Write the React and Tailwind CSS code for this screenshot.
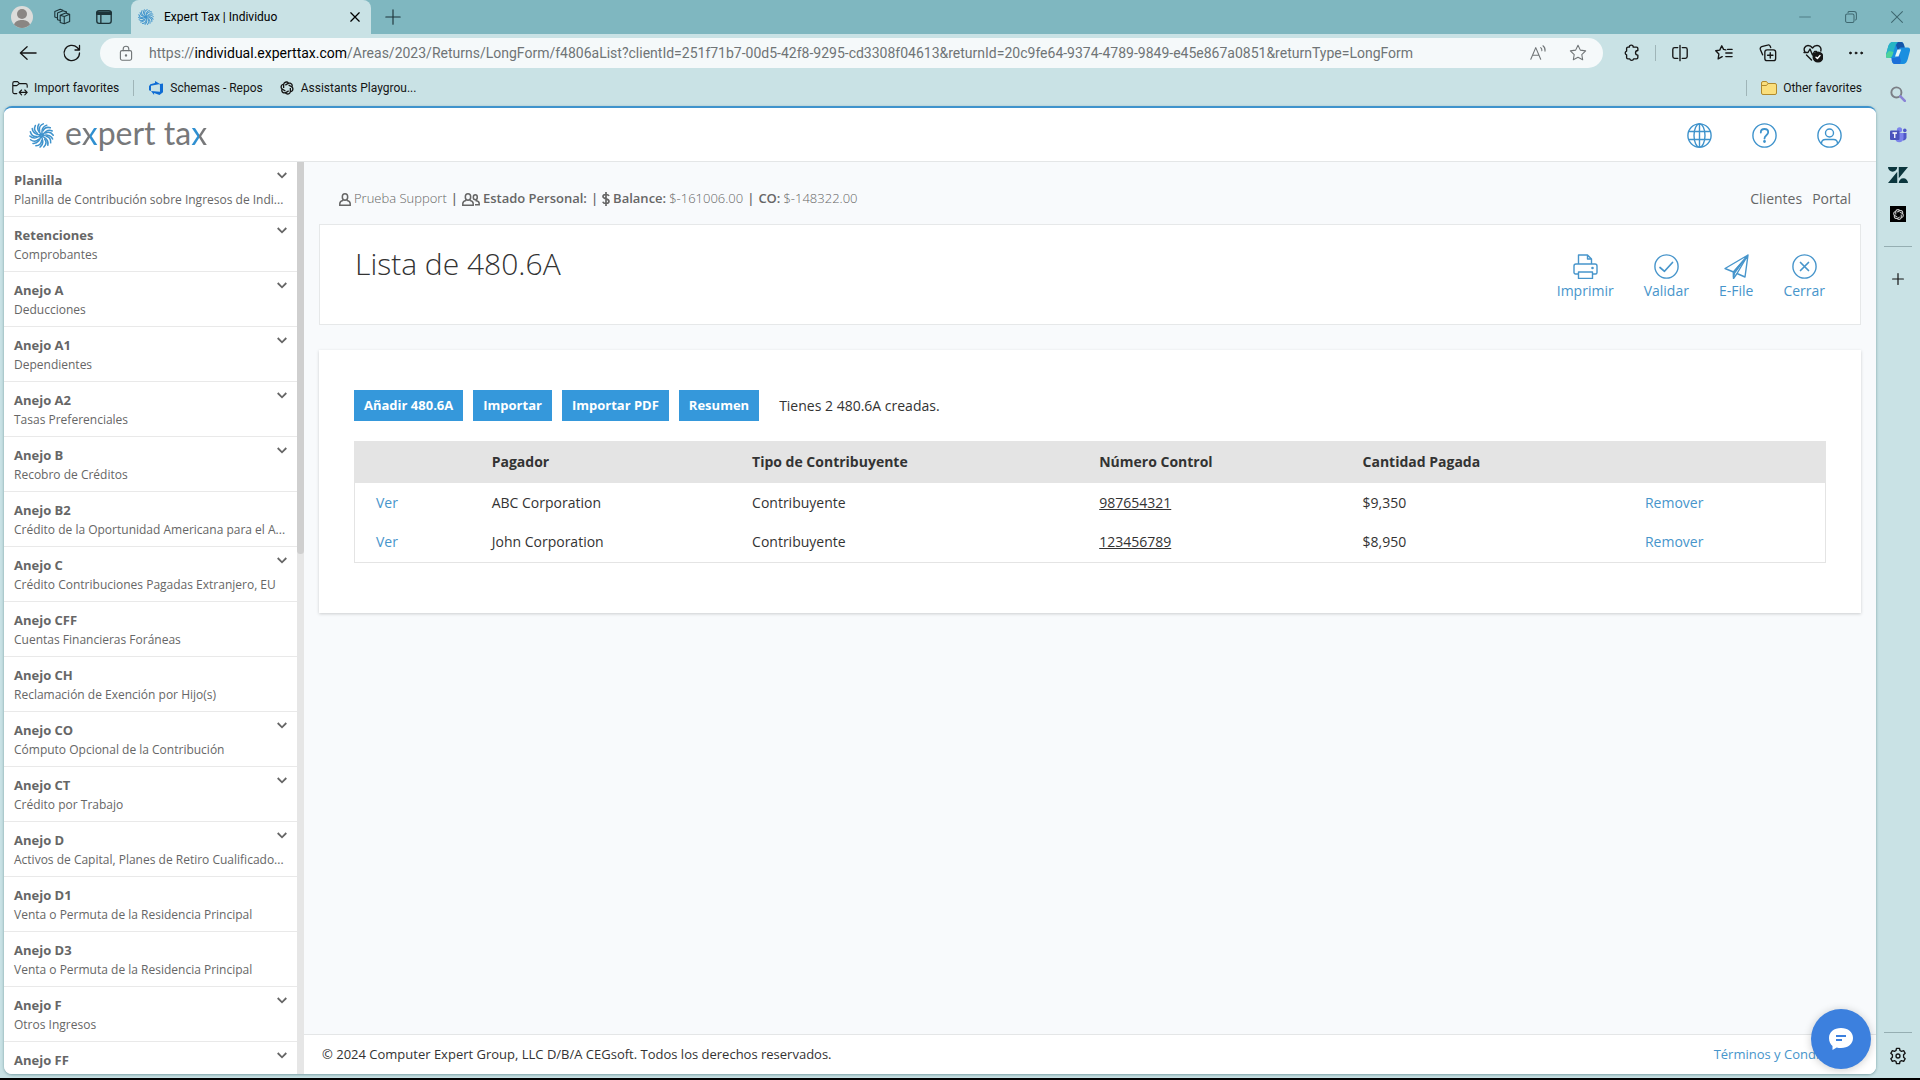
import { RiOpenaiLine } from "react-icons/ri";
import { VscAzureDevops } from "react-icons/vsc";

const BLUE = "#3f93cc";

const sections = [
  ["Planilla", "Planilla de Contribución sobre Ingresos de Indi...", true],
  ["Retenciones", "Comprobantes", true],
  ["Anejo A", "Deducciones", true],
  ["Anejo A1", "Dependientes", true],
  ["Anejo A2", "Tasas Preferenciales", true],
  ["Anejo B", "Recobro de Créditos", true],
  ["Anejo B2", "Crédito de la Oportunidad Americana para el A...", false],
  ["Anejo C", "Crédito Contribuciones Pagadas Extranjero, EU", true],
  ["Anejo CFF", "Cuentas Financieras Foráneas", false],
  ["Anejo CH", "Reclamación de Exención por Hijo(s)", false],
  ["Anejo CO", "Cómputo Opcional de la Contribución", true],
  ["Anejo CT", "Crédito por Trabajo", true],
  ["Anejo D", "Activos de Capital, Planes de Retiro Cualificado...", true],
  ["Anejo D1", "Venta o Permuta de la Residencia Principal", false],
  ["Anejo D3", "Venta o Permuta de la Residencia Principal", false],
  ["Anejo F", "Otros Ingresos", true],
  ["Anejo FF", "", true],
];

const rows = [
  { pagador: "ABC Corporation", tipo: "Contribuyente", control: "987654321", cantidad: "$9,350" },
  { pagador: "John Corporation", tipo: "Contribuyente", control: "123456789", cantidad: "$8,950" },
];

function Icon({ size = 18, box = 20, sw = 1.2, color = "currentColor", children }) {
  return (
    <svg
      width={size}
      height={size}
      viewBox={`0 0 ${box} ${box}`}
      fill="none"
      stroke={color}
      strokeWidth={sw}
      strokeLinecap="round"
      strokeLinejoin="round"
      className="shrink-0"
      aria-hidden="true"
    >
      {children}
    </svg>
  );
}

function Swirl({ size }) {
  return (
    <svg width={size} height={size} viewBox="-50 -50 100 100" fill="none" stroke={BLUE} strokeLinecap="round" className="shrink-0" aria-hidden="true">
      {Array.from({ length: 9 }, (_, i) => (
        <g key={i} transform={`rotate(${i * 40})`}>
          <path d="M3 3C8 -14 26 -26 43 -18" strokeWidth="6" />
          <path d="M16 -10C26 -15 39 -13 47 -1" strokeWidth="6" />
        </g>
      ))}
    </svg>
  );
}

function TabStrip() {
  return (
    <div className="flex h-[34px] shrink-0 items-center bg-[#7fb7c0] text-[#1d3338]">
      <button aria-label="Perfil" className="ml-[11px]">
        <svg width="22" height="22" viewBox="0 0 22 22" aria-hidden="true">
          <circle cx="11" cy="11" r="11" fill="#dcdcda" />
          <circle cx="11" cy="8" r="5" fill="#8a8683" />
          <path d="M3 18.500C4.500 15 7.500 14 11 14s6.500 1 8 4.500A11 11 0 0 1 3 18.500z" fill="#8a8683" />
        </svg>
      </button>
      <button aria-label="Espacios de trabajo" className="ml-5">
        <Icon size={18}>
          <path d="M8 8l6-2.500 4.500 1.500v8l-6 2.500L8 16zM8 8l4.500 1.500v8M12.500 9.500l6-2.500" />
          <path d="M8 14l-3-1V5.500L11 3l4 1.300v1M5 11l-3-1V4l6-2.500 3 1" />
        </Icon>
      </button>
      <button aria-label="Pestañas verticales" className="ml-6">
        <Icon size={18} sw={1.5}>
          <rect x="2" y="3" width="16" height="14" rx="2.500" />
          <path d="M2 4.500h16v2.500H2z" fill="currentColor" />
          <path d="M6.500 7v10" />
        </Icon>
      </button>
      <div className="ml-[18px] flex h-full w-[240px] items-center rounded-t-lg bg-[#c9e2e5] pr-[9px] pl-[7px] text-black">
        <Swirl size={16} />
        <span className="ml-[10px] flex-1 text-xs">Expert Tax | Individuo</span>
        <button aria-label="Cerrar pestaña">
          <Icon size={14} sw={1.8}><path d="M4 4l12 12M16 4L4 16" /></Icon>
        </button>
      </div>
      <button aria-label="Nueva pestaña" className="ml-[14px]">
        <Icon size={16} sw={1.4}><path d="M10 1v18M1 10h18" /></Icon>
      </button>
      <div className="ml-auto flex items-center gap-[34px] pr-[17px] text-[#3f6870]">
        <button aria-label="Minimizar"><Icon size={12}><path d="M1 10h18" /></Icon></button>
        <button aria-label="Restaurar">
          <Icon size={12} sw={1.7}>
            <rect x="1" y="5" width="14" height="14" rx="2.500" />
            <path d="M5 2.500A2 2 0 0 1 7 1h8a4 4 0 0 1 4 4v8a2 2 0 0 1-1.500 2" />
          </Icon>
        </button>
        <button aria-label="Cerrar ventana"><Icon size={12} sw={1.7}><path d="M1 1l18 18M19 1L1 19" /></Icon></button>
      </div>
    </div>
  );
}

function Copilot() {
  return (
    <svg width="24" height="22" viewBox="0 0 24 22" aria-hidden="true">
      <path d="M7 0h8c2 0 2.500 1.500 3 3l.7 2.500H22c2 0 2.400 2 1.800 4l-2 7.500c-.8 3-2.300 5-4.800 5H9c-2 0-2.700-1.500-3.200-3.500L5.300 16H2c-2 0-2.300-2-1.800-4l2-7.500C3 2 4.500 0 7 0z" fill="#1a8fe0" />
      <path d="M7 0h5.500c-2 .5-2.700 2-3.300 4L6.500 13c-.6 2-1.500 3-3.500 3H2c-2 0-2.300-2-1.800-4l2-7.500C3 2 4.500 0 7 0z" fill="#27b5c4" />
      <path d="M.2 12 3 9l4.500 1-1 3c-.6 2-1.500 3-3.500 3H2c-2 0-2.300-2-1.800-4z" fill="#4fd39a" />
      <path d="M12 0h3c2 0 2.500 1.500 3 3l.7 2.500h-3c-1.500 0-2.500.5-3 2L12 9 10 3z" fill="#1555a8" />
      <path d="M6 16h3c1.500 0 2-1 2.500-2.500l1-3L15 19l-1 3H9c-2 0-2.700-1.500-3.200-3.500z" fill="#1d6fd8" />
      <path d="M11.500 7.500h3.700l-2.700 7H9z" fill="#e8f6f8" />
    </svg>
  );
}

function Toolbar() {
  return (
    <div className="flex h-[38px] shrink-0 items-center text-[#151515]">
      <button aria-label="Atrás" className="ml-[19px]"><Icon size={18} sw={1.4}><path d="M19 10H2M9 3l-7.500 7L9 17" /></Icon></button>
      <button aria-label="Actualizar" className="ml-[25px]">
        <Icon size={20} sw={1.3}><path d="M17.500 10a7.700 7.700 0 1 1-2.300-5.500L17.500 7M17.500 2.500V7H13" /></Icon>
      </button>
      <div className="ml-[18px] flex h-[30px] flex-1 items-center rounded-full bg-[#f5f9fa] pr-[16px] pl-[18px] text-[#6f7476]">
        <Icon size={16} sw={1.4}>
          <rect x="3" y="7" width="14" height="12" rx="2" />
          <path d="M6.500 7V5a3.500 3.500 0 0 1 7 0v2" />
          <circle cx="10" cy="13" r=".8" fill="currentColor" />
        </Icon>
        <div className="ml-[15px] flex-1 text-sm whitespace-nowrap">
          https://<span className="text-black">individual.experttax.com</span>/Areas/2023/Returns/LongForm/f4806aList?clientId=251f71b7-00d5-42f8-9295-cd3308f04613&amp;returnId=20c9fe64-9374-4789-9849-e45e867a0851&amp;returnType=LongForm
        </div>
        <button aria-label="Leer en voz alta">
          <Icon size={18} sw={1.2}>
            <path d="M2 17L7.500 4 13 17M4 12.500h7M13 4c1 .8 1.500 2 1.300 3.500M15.500 2c2 1.500 2.700 3.500 2.300 6" />
          </Icon>
        </button>
        <button aria-label="Añadir a favoritos" className="ml-[22px]">
          <Icon size={18} sw={1.2}><path d="M10 1.500l2.600 5.300 5.900.8-4.300 4.100 1 5.800L10 14.800l-5.200 2.700 1-5.800L1.500 7.600l5.900-.8z" /></Icon>
        </button>
      </div>
      <div className="ml-5 flex items-center">
        <button aria-label="Extensiones">
          <Icon size={18} sw={1.5}>
            <path d="M7 3.500a2.200 2.200 0 0 1 4.400 0H15a1.500 1.500 0 0 1 1.500 1.500v2.200a2.600 2.600 0 1 0 0 5.200V15a1.500 1.500 0 0 1-1.500 1.500h-3.200a2.200 2.200 0 0 1-4.300 0H5.500A1.500 1.500 0 0 1 4 15v-3a2.200 2.200 0 0 1 0-4.200V5a1.500 1.500 0 0 1 1.500-1.500z" />
          </Icon>
        </button>
        <span className="ml-[14px] h-4 w-px bg-[#9fb5b8]" />
        <button aria-label="Pantalla dividida" className="ml-[15px]">
          <Icon size={18} sw={1.5}><path d="M7.500 4H4a2 2 0 0 0-2 2v8a2 2 0 0 0 2 2h3.500M12.500 4H16a2 2 0 0 1 2 2v8a2 2 0 0 1-2 2h-3.500M10 1.500v17" /></Icon>
        </button>
        <button aria-label="Favoritos" className="ml-[26px]">
          <Icon size={18} sw={1.5}><path d="M12 6.500L9.500 6 7.500 2 5.300 6.800.8 7.500l3.500 3.600-.8 5.400L8 14M12 10h7M12 14h7M14 6h5" /></Icon>
        </button>
        <button aria-label="Colecciones" className="ml-[26px]">
          <Icon size={18} sw={1.5}>
            <path d="M4 12L1.500 6a2.500 2.500 0 0 1 1.500-3L9.500 1.200a2.500 2.500 0 0 1 3 1.300L13 4" />
            <rect x="6.500" y="6.500" width="12" height="12" rx="2.500" />
            <path d="M12.500 9.500v6M9.500 12.500h6" />
          </Icon>
        </button>
        <button aria-label="Rendimiento" className="ml-[26px]">
          <Icon size={20} sw={1.4}>
            <path d="M2 9C0 6 2 2.500 5 2.500c2 0 3.500 1 4.500 2.500 1-1.500 2.500-2.500 4.500-2.500 2.800 0 4.600 2.700 3.800 5.500M1 9.500h4l2-3.500 2.500 6 2-3.500h2M3.500 12l5 5" />
            <circle cx="15" cy="14" r="4.800" fill="currentColor" />
            <path d="M13 14.200l1.400 1.300 2.600-3" stroke="#fff" />
          </Icon>
        </button>
        <button aria-label="Más opciones" className="ml-[25px]">
          <Icon size={16} sw={1}><g fill="currentColor"><circle cx="3" cy="10" r="1.200" /><circle cx="10" cy="10" r="1.200" /><circle cx="17" cy="10" r="1.200" /></g></Icon>
        </button>
        <button aria-label="Copilot" className="mr-[10px] ml-[22px]"><Copilot /></button>
      </div>
    </div>
  );
}

function FavoritesBar() {
  return (
    <div className="flex h-[34px] shrink-0 items-center pb-[2px] text-xs text-[#151515]">
      <button className="ml-2 flex items-center gap-[6px]">
        <Icon size={16} sw={1.4}>
          <path d="M6 17H3a2 2 0 0 1-2-2V4a2 2 0 0 1 2-2h4l2.500 2.500H17a2 2 0 0 1 2 2V9M1 7h5l3-2.500M9.500 15.500h9M12 12.500l-3 3 3 3M16 12.500l3 3-3 3" />
        </Icon>
        Import favorites
      </button>
      <span className="mx-[14px] h-4 w-px bg-[#9fb5b8]" />
      <a href="#schemas" className="flex items-center gap-[6px]"><VscAzureDevops size={16} color="#0f6cd4" />Schemas - Repos</a>
      <a href="#assistants" className="ml-4 flex items-center gap-[6px]"><RiOpenaiLine size={16} />Assistants Playgrou...</a>
      <button className="mr-[14px] ml-auto flex items-center">
        <span className="mr-[14px] h-4 w-px bg-[#9fb5b8]" />
        <svg width="16" height="14" viewBox="0 0 16 14" fill="#fadf7c" stroke="#b08a2e" aria-hidden="true">
          <path d="M.5 2A1.500 1.500 0 0 1 2 .5h3.500L7 2.500h7A1.500 1.500 0 0 1 15.500 4v8A1.500 1.500 0 0 1 14 13.500H2A1.500 1.500 0 0 1 .5 12z" />
          <path d="M.5 4.500h5L7 2.500" fill="none" />
        </svg>
        <span className="ml-[6px]">Other favorites</span>
      </button>
    </div>
  );
}

function EdgeSidebar() {
  return (
    <aside className="flex w-[44px] shrink-0 flex-col items-center pt-[14px] pb-[13px] text-[#151515]">
      <button aria-label="Buscar">
        <Icon size={16} sw={2.4} color="#7b7f86">
          <circle cx="8" cy="8" r="6.300" />
          <path d="M13 13l5.500 5.500" stroke="#8a83d6" strokeWidth="3.200" />
        </Icon>
      </button>
      <button aria-label="Teams" className="mt-[25px]">
        <svg width="17" height="16" viewBox="0 0 17 16" aria-hidden="true">
          <circle cx="9.500" cy="2.800" r="2.600" fill="#7b83eb" />
          <circle cx="14.800" cy="3.400" r="1.800" fill="#5059c9" />
          <path d="M12 6h4.500v4.500a3 3 0 0 1-4.500 2.500z" fill="#5059c9" />
          <path d="M5 6h8.500v5.500a4.300 4.300 0 0 1-8.500 0z" fill="#7b83eb" />
          <rect y="3.500" width="9.500" height="9.500" rx="1" fill="#4b53bc" />
          <path d="M2.500 6h4.500M4.750 6v5" stroke="#fff" strokeWidth="1.300" />
        </svg>
      </button>
      <button aria-label="Zendesk" className="mt-6">
        <svg width="20" height="16" viewBox="0 1 24 19" fill="#0b363d" aria-hidden="true">
          <path d="M11.100 6.500V20H0zM11.100 1a5.550 5.550 0 0 1-11.100 0zM12.900 20a5.550 5.550 0 0 1 11.100 0zM12.900 14.500V1H24z" />
        </svg>
      </button>
      <button aria-label="ChatGPT" className="mt-[23px] flex size-4 items-center justify-center bg-black text-[#c8c8c8]">
        <RiOpenaiLine size={13} />
      </button>
      <span className="mt-6 h-px w-7 bg-[#95aeb2]" />
      <button aria-label="Personalizar" className="mt-[26px]"><Icon size={12} sw={2}><path d="M10 1v18M1 10h18" /></Icon></button>
      <span className="mt-auto h-px w-7 bg-[#95aeb2]" />
      <button aria-label="Configuración" className="mt-[14px]">
        <Icon size={18} sw={1.5}>
          <path d="M8.300 1.500h3.400l.5 2.400 1.700 1 2.400-.8 1.700 2.900-1.800 1.700v2.600l1.800 1.700-1.700 2.900-2.400-.8-1.700 1-.5 2.400H8.300l-.5-2.400-1.700-1-2.400.8L2 13l1.800-1.700V8.700L2 7l1.700-2.900 2.400.8 1.700-1z" />
          <circle cx="10" cy="10" r="2.200" />
        </Icon>
      </button>
    </aside>
  );
}

function AppHeader() {
  return (
    <header className="flex h-[54px] shrink-0 items-center border-b border-[#e4e6e7] bg-white pt-[2px] pr-[34px] pl-[25px] text-[#3f93cc]">
      <a href="#inicio" className="flex items-center gap-[11px]">
        <Swirl size={25} />
        <span className="-mt-[6px] font-['Lato',sans-serif] text-[32px] leading-[50px] font-normal text-[#77787a]">
          e<span className="bg-linear-to-r from-[#77787a] from-50% to-[#2f8fd0] to-50% bg-clip-text text-transparent">x</span>pert ta<span className="bg-linear-to-r from-[#2f8fd0] from-50% to-[#77787a] to-50% bg-clip-text text-transparent">x</span>
        </span>
      </a>
      <div className="ml-auto flex items-center gap-[40px]">
        <button aria-label="Idioma">
          <Icon size={25} box={25} sw={1.4}>
            <circle cx="12.500" cy="12.500" r="11.600" />
            <ellipse cx="12.500" cy="12.500" rx="5.500" ry="11.600" />
            <path d="M12.500 1v23M2.500 8.500h20M2.500 16.500h20" />
          </Icon>
        </button>
        <button aria-label="Ayuda">
          <Icon size={25} box={25} sw={1.4}>
            <circle cx="12.500" cy="12.500" r="11.600" />
            <path d="M8.800 9.500c0-2.200 1.600-3.500 3.700-3.500s3.700 1.300 3.700 3.300c0 3-3.700 2.900-3.700 6.200" strokeWidth="1.800" />
            <circle cx="12.500" cy="18.500" r=".7" fill="currentColor" />
          </Icon>
        </button>
        <button aria-label="Cuenta">
          <Icon size={25} box={25} sw={1.4}>
            <circle cx="12.500" cy="12.500" r="11.600" />
            <circle cx="12.500" cy="10" r="4" />
            <path d="M4.500 20.500c0-2.500 1.500-4 4-4h8c2.500 0 4 1.500 4 4" />
          </Icon>
        </button>
      </div>
    </header>
  );
}

function FormNav() {
  return (
    <nav className="flex w-[300px] shrink-0 overflow-hidden bg-white text-[#666]">
      <ul className="min-w-0 flex-1 overflow-hidden">
        {sections.map(([title, detail, expandable]) => (
          <li key={title} className="h-[55px] border-b border-[#e9e9e9]">
            <button className="relative block w-full px-[10px] pt-[9px] text-left">
              <span className="block text-[13px] leading-[18px] font-bold">{title}</span>
              <span className="block text-xs leading-[22px] whitespace-nowrap">{detail}</span>
              {expandable && (
                <svg width="10" height="7" viewBox="0 0 10 7" fill="none" stroke="currentColor" strokeWidth="1.800" className="absolute top-[10px] right-[10px]" aria-hidden="true">
                  <path d="M.7 1L5 5.300 9.300 1" />
                </svg>
              )}
            </button>
          </li>
        ))}
      </ul>
      <div className="w-[7px] shrink-0 bg-[#e6e6e6]">
        <div className="h-[43%] rounded-b bg-[#cfcfcf]" />
      </div>
    </nav>
  );
}

function PersonIcon({ pair }) {
  return (
    <svg width={pair ? 18 : 12} height="13" viewBox={pair ? "0 0 18 13" : "0 0 12 13"} fill="none" stroke="currentColor" strokeWidth="1.500" className="shrink-0" aria-hidden="true">
      <ellipse cx="6" cy="4" rx="2.700" ry="3.200" />
      <path d="M4.300 7.200C2 7.800.8 8.800.8 10.500v1.700h10.400v-1.700c0-1.700-1.200-2.700-3.500-3.300" />
      {pair && (
        <>
          <ellipse cx="13.300" cy="4.300" rx="2" ry="2.500" />
          <path d="M13.500 7.600c2.300.4 3.700 1.200 3.700 2.900v1.200H13" />
        </>
      )}
    </svg>
  );
}

function ClientBar() {
  return (
    <div className="ml-5 flex h-[38px] items-center text-[13px] text-[#666]">
      <div className="flex items-center gap-1 font-semibold">
        <span className="flex items-center gap-[3px]"><PersonIcon /><span className="font-light">Prueba Support</span></span>
        <span>|</span>
        <span className="flex items-center gap-[3px]"><PersonIcon pair />Estado Personal:</span>
        <span>|</span>
        <span className="flex items-center gap-[3px]">
          <svg width="8" height="14" viewBox="0 0 8 14" fill="none" stroke="currentColor" strokeWidth="1.700" aria-hidden="true">
            <path d="M4 0v14M7 4C6.500 2.800 5.500 2.500 4 2.500c-2 0-3 .8-3 2.100C1 7.500 7 6.300 7 9.300c0 1.400-1.200 2.200-3 2.200S1.200 11 .8 9.700" />
          </svg>
          Balance: <span className="font-light">$-161006.00</span>
        </span>
        <span>|</span>
        <span className="flex items-center gap-[3px]">CO: <span className="font-light">$-148322.00</span></span>
      </div>
      <div className="ml-auto flex gap-[10px] pr-[10px] text-sm font-medium">
        <a href="#clientes">Clientes</a>
        <a href="#portal">Portal</a>
      </div>
    </div>
  );
}

const actions = [
  ["Imprimir", <g key="i"><path d="M5.500 10V1h9l4 4v5M14.500 1v4h4M5.500 20H2.500A1.500 1.500 0 0 1 1 18.500V12a2 2 0 0 1 2-2h19a2 2 0 0 1 2 2v6.500a1.500 1.500 0 0 1-1.500 1.500h-3M5.500 18h14v6.500h-14z" /><circle cx="19.500" cy="14" r=".6" fill="currentColor" /></g>],
  ["Validar", <g key="v"><circle cx="12.500" cy="12.500" r="11.600" /><path d="M6 13.500l4.500 3.800L18.500 8.500" strokeWidth="1.700" /></g>],
  ["E-File", <g key="e"><path d="M1 14.500L24 1l-3 22-8-3.500L9.500 24.500V18zM9.500 18L24 1 13 19.500" /><path d="M9.500 18L19 7.500l-8.500 11.500-1 4z" fill="currentColor" /></g>],
  ["Cerrar", <g key="c"><circle cx="12.500" cy="12.500" r="11.600" /><path d="M8.500 8.500l8 8M16.500 8.500l-8 8" strokeWidth="1.700" /></g>],
];

function Main() {
  return (
    <div className="flex min-w-0 flex-1 flex-col bg-[#f8fafc] text-[#333]">
      <main className="flex-1 px-[15px] pt-[18px]">
        <ClientBar />
        <section className="mt-[6px] flex h-[101px] justify-between border border-[#e6e8e9] bg-white px-[35px]">
          <h1 className="pt-[17px] text-[30px] leading-[44px] font-light">Lista de 480.6A</h1>
          <div className="flex items-start gap-[30px] pt-[29px] text-[#4795cb]">
            {actions.map(([label, art]) => (
              <button key={label} className="flex flex-col items-center text-sm leading-6">
                <Icon size={25} box={25} sw={1.4}>{art}</Icon>
                {label}
              </button>
            ))}
          </div>
        </section>
        <section className="mt-[25px] bg-white px-[35px] pt-10 pb-[50px] shadow-[0_1px_3px_rgba(0,0,0,0.18)]">
          <div className="flex items-center gap-[10px]">
            {["Añadir 480.6A", "Importar", "Importar PDF", "Resumen"].map((label) => (
              <button key={label} className="h-[31px] bg-[#3598db] px-[10px] text-[13px] font-bold text-white">{label}</button>
            ))}
            <span className="ml-[10px] text-sm">Tienes 2 480.6A creadas.</span>
          </div>
          <table className="mt-5 w-full table-fixed border border-[#e4e4e4] text-left text-sm">
            <colgroup>
              <col className="w-[7.9%]" />
              <col className="w-[17.7%]" />
              <col className="w-[23.6%]" />
              <col className="w-[17.9%]" />
              <col className="w-[19.2%]" />
              <col className="w-[13.7%]" />
            </colgroup>
            <thead>
              <tr className="h-[41px] bg-[#e4e4e4]">
                {["", "Pagador", "Tipo de Contribuyente", "Número Control", "Cantidad Pagada", ""].map((h, i) => (
                  <th key={i} className="pl-[21px] font-bold">{h}</th>
                ))}
              </tr>
            </thead>
            <tbody>
              {rows.map((r) => (
                <tr key={r.control} className="h-10">
                  <td className="pl-[21px]"><a href="#ver" className="text-[#4795cb]">Ver</a></td>
                  <td className="pl-[21px]">{r.pagador}</td>
                  <td className="pl-[21px]">{r.tipo}</td>
                  <td className="pl-[21px]"><a href="#control" className="underline">{r.control}</a></td>
                  <td className="pl-[21px]">{r.cantidad}</td>
                  <td className="pl-[21px]"><a href="#remover" className="text-[#4795cb]">Remover</a></td>
                </tr>
              ))}
            </tbody>
          </table>
        </section>
      </main>
      <footer className="flex h-10 shrink-0 items-center justify-between border-t border-[#e4e6e7] bg-white px-[18px] text-[13px]">
        <p>© 2024 Computer Expert Group, LLC D/B/A CEGsoft. Todos los derechos reservados.</p>
        <a href="#terminos" className="text-[#4795cb]">Términos y Condiciones</a>
      </footer>
    </div>
  );
}

export default function App() {
  return (
    <div className="flex h-screen flex-col border-b-2 border-black bg-[#c9e2e5] font-['Roboto',sans-serif]">
      <TabStrip />
      <Toolbar />
      <div className="flex min-h-0 flex-1">
        <div className="flex min-w-0 flex-1 flex-col pb-1 pl-1">
          <FavoritesBar />
          <div className="relative flex min-h-0 flex-1 flex-col overflow-hidden rounded-lg border-t-2 border-[#3f93cc] bg-white font-['Open_Sans',sans-serif] shadow-[0_1px_3px_rgba(0,60,70,0.4)]">
            <AppHeader />
            <div className="flex min-h-0 flex-1">
              <FormNav />
              <Main />
            </div>
            <button aria-label="Chat" className="absolute right-[5px] bottom-[5px] flex size-[60px] items-center justify-center rounded-full bg-[#3c80de] shadow-[0_1px_8px_rgba(0,0,0,0.2)]">
              <svg width="24" height="22" viewBox="0 0 24 22" fill="#fff" aria-hidden="true">
                <path d="M12 0c7 0 12 4 12 10s-5 10-12 10c-1.500 0-3-.2-4.300-.6L3.500 22v-4C1.300 16 0 13.500 0 10 0 4 5 0 12 0z" />
                <path d="M7 8h10M7 12h6" stroke="#3c80de" strokeWidth="1.800" />
              </svg>
            </button>
          </div>
        </div>
        <EdgeSidebar />
      </div>
    </div>
  );
}
